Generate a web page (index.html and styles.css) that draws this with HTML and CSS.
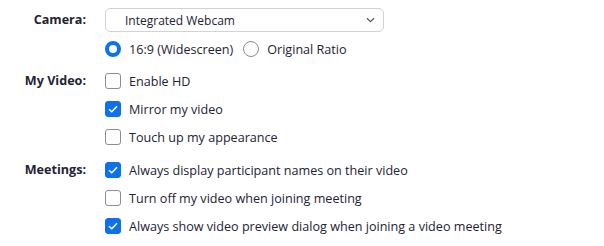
FILE: index.html
```html
<!DOCTYPE html>
<html>
<head>
<meta charset="utf-8">
<link rel="stylesheet" href="styles.css">
</head>
<body>
<div class="settings">
  <div class="group">
    <div class="label label-cam">Camera:</div>
    <div class="controls">
      <div class="select">
        <span>Integrated Webcam</span>
        <svg class="chev" width="9" height="6" viewBox="0 0 9 6"><path d="M1 1.2 L4.5 4.6 L8 1.2" fill="none" stroke="#555" stroke-width="1.2"/></svg>
      </div>
      <div class="radios">
        <label class="opt"><span class="radio on"></span>16:9 (Widescreen)</label>
        <label class="opt"><span class="radio"></span>Original Ratio</label>
      </div>
    </div>
  </div>
  <div class="group">
    <div class="label">My Video:</div>
    <div class="controls">
      <label class="opt row"><span class="box"></span>Enable HD</label>
      <label class="opt row"><span class="box on"><svg width="10" height="8" viewBox="0 0 10 8"><path d="M1 4.2 L3.8 6.8 L9 1.2" fill="none" stroke="#fff" stroke-width="1.5"/></svg></span>Mirror my video</label>
      <label class="opt row"><span class="box"></span>Touch up my appearance</label>
    </div>
  </div>
  <div class="group group-meetings">
    <div class="label">Meetings:</div>
    <div class="controls">
      <label class="opt row"><span class="box on"><svg width="10" height="8" viewBox="0 0 10 8"><path d="M1 4.2 L3.8 6.8 L9 1.2" fill="none" stroke="#fff" stroke-width="1.5"/></svg></span>Always display participant names on their video</label>
      <label class="opt row"><span class="box"></span>Turn off my video when joining meeting</label>
      <label class="opt row"><span class="box on"><svg width="10" height="8" viewBox="0 0 10 8"><path d="M1 4.2 L3.8 6.8 L9 1.2" fill="none" stroke="#fff" stroke-width="1.5"/></svg></span>Always show video preview dialog when joining a video meeting</label>
    </div>
  </div>
</div>
</body>
</html>
```
FILE: styles.css
```css
html, body {
  margin: 0;
  padding: 0;
  background: #fff;
}
body {
  font-family: "Open Sans", "Noto Sans", sans-serif;
  font-size: 12.6px;
  color: #232333;
}
.settings {
  padding-top: 8px;
  display: flex;
  flex-direction: column;
  gap: 4px;
}
.group {
  display: grid;
  grid-template-columns: 86px 1fr;
  column-gap: 19px;
  align-items: start;
}
.group-meetings {
  margin-top: 1px;
}
.label {
  text-align: right;
  font-weight: 700;
  height: 28px;
  line-height: 28px;
}
.label-cam {
  height: 24px;
  line-height: 24px;
}
.controls {
  display: flex;
  flex-direction: column;
}
.select {
  width: 279px;
  height: 24px;
  box-sizing: border-box;
  border: 1px solid #d2d2d6;
  border-radius: 5px;
  display: flex;
  align-items: center;
  justify-content: space-between;
  padding: 0 8px 0 19px;
  font-size: 12px;
}
.radios {
  display: flex;
  gap: 10px;
  height: 28px;
  margin-top: 3px;
  align-items: center;
}
.opt {
  display: flex;
  align-items: center;
  gap: 8px;
  white-space: nowrap;
}
.row {
  height: 28px;
}
.radio {
  width: 16px;
  height: 16px;
  box-sizing: border-box;
  border-radius: 50%;
  border: 1px solid #8c8c94;
}
.radio.on {
  border: 4px solid #0e71eb;
}
.box {
  width: 16px;
  height: 16px;
  box-sizing: border-box;
  border-radius: 3px;
  border: 1px solid #8c8c94;
  display: flex;
  align-items: center;
  justify-content: center;
}
.box.on {
  background: #0e71eb;
  border-color: #0e71eb;
}
```
